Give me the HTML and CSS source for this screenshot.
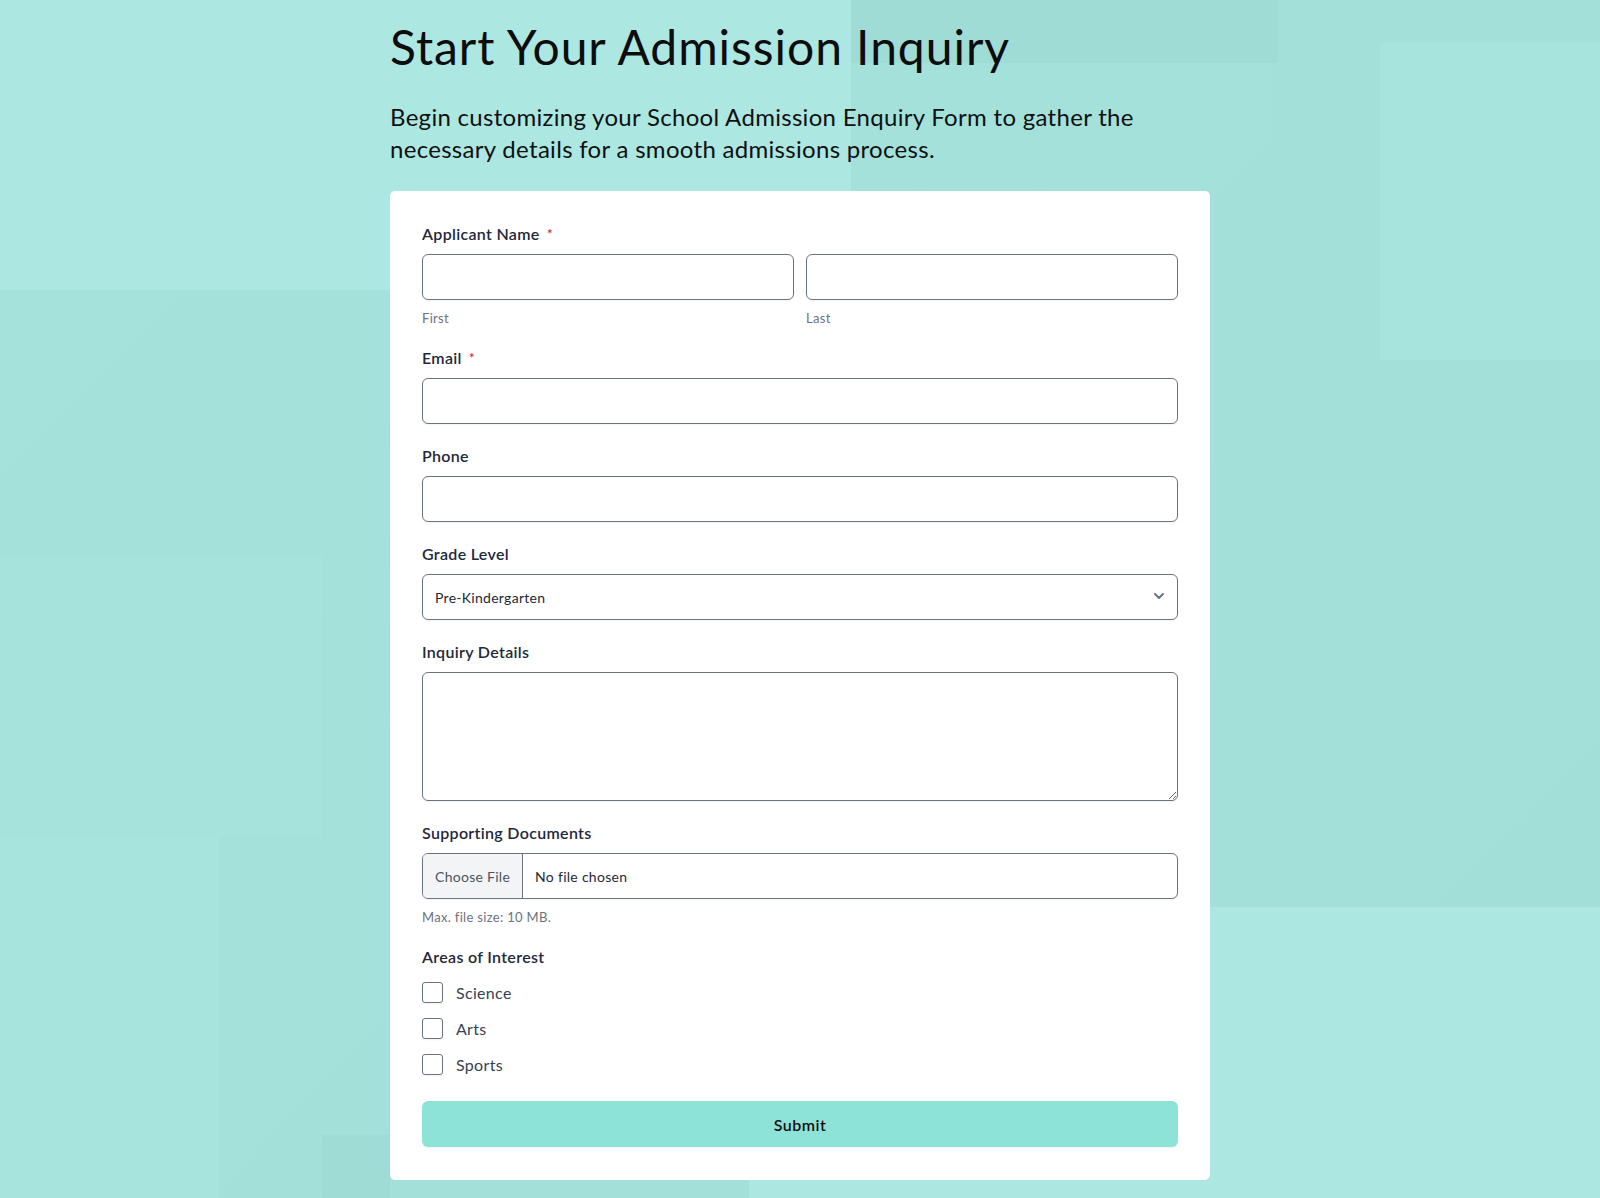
FILE: index.html
```html
<!DOCTYPE html>
<html lang="en">
<head>
<meta charset="utf-8">
<title>Start Your Admission Inquiry</title>
<link rel="stylesheet" href="styles.css">
</head>
<body>
<main class="page">
  <h1 class="title">Start Your Admission Inquiry</h1>
  <p class="intro">Begin customizing your School Admission Enquiry Form to gather the necessary details for a smooth admissions process.</p>

  <form class="card">
    <div class="field">
      <div class="label">Applicant Name <span class="req">*</span></div>
      <div class="name-row">
        <div class="name-col">
          <input class="input" type="text">
          <div class="sub">First</div>
        </div>
        <div class="name-col">
          <input class="input" type="text">
          <div class="sub">Last</div>
        </div>
      </div>
    </div>

    <div class="field">
      <div class="label">Email <span class="req">*</span></div>
      <input class="input" type="text">
    </div>

    <div class="field">
      <div class="label">Phone</div>
      <input class="input" type="text">
    </div>

    <div class="field">
      <div class="label">Grade Level</div>
      <div class="select-wrap">
        <div class="input select">Pre-Kindergarten</div>
        <svg class="chev" width="12" height="8" viewBox="0 0 12 8"><path d="M2 2 L6 6 L10 2" fill="none" stroke="#6b7280" stroke-width="2" stroke-linecap="round" stroke-linejoin="round"/></svg>
      </div>
    </div>

    <div class="field">
      <div class="label">Inquiry Details</div>
      <textarea class="input textarea"></textarea>
    </div>

    <div class="field">
      <div class="label">Supporting Documents</div>
      <div class="input file">
        <span class="file-btn">Choose File</span>
        <span class="file-name">No file chosen</span>
      </div>
      <div class="sub">Max. file size: 10 MB.</div>
    </div>

    <div class="field">
      <div class="label label-tight">Areas of Interest</div>
      <div class="checks">
        <label class="check"><input type="checkbox" class="box"><span>Science</span></label>
        <label class="check"><input type="checkbox" class="box"><span>Arts</span></label>
        <label class="check"><input type="checkbox" class="box"><span>Sports</span></label>
      </div>
    </div>

    <button type="button" class="submit">Submit</button>
  </form>
</main>
</body>
</html>
```

FILE: styles.css
```css
html, body {
  margin: 0;
  padding: 0;
}

body {
  font-family: Lato, "Noto Sans", sans-serif;
  color: #111;
  letter-spacing: 0.02em;
  min-height: 1198px;
  background-color: #a5e1db;
  background-repeat: no-repeat;
  background-image:
    linear-gradient(#a0dcd6, #a0dcd6),
    linear-gradient(#a8e4de, #a8e4de),
    linear-gradient(#a4e0da, #a4e0da),
    linear-gradient(#ade7e1, #ade7e1),
    linear-gradient(#a8e4de, #a8e4de),
    linear-gradient(#a7e3dd, #a7e3dd),
    linear-gradient(#a0dcd6, #a0dcd6),
    linear-gradient(#ade7e1, #ade7e1),
    linear-gradient(#ade7e1, #ade7e1),
    linear-gradient(135deg, #a6e2dc, #a3dfd9);
  background-position:
    851px 0,
    1380px 43px,
    1278px 0,
    1210px 907px,
    0 837px,
    0 556px,
    322px 1135px,
    749px 1180px,
    0 0,
    0 0;
  background-size:
    427px 63px,
    220px 317px,
    322px 642px,
    390px 291px,
    219px 361px,
    322px 281px,
    68px 63px,
    461px 18px,
    851px 290px,
    100% 100%;
}

.page {
  width: 820px;
  margin: 0 auto;
  padding: 18px 0 18px;
}

.title {
  margin: 0 0 25px;
  font-size: 48px;
  line-height: 58px;
  font-weight: 400;
  letter-spacing: 0.95px;
  color: #0d0d0d;
}

.intro {
  margin: 0 0 26px;
  font-size: 24px;
  line-height: 32px;
  letter-spacing: 0.3px;
  color: #111;
}

.card {
  background: #fff;
  border-radius: 5px;
  padding: 31px 32px 33px;
  display: flex;
  flex-direction: column;
  gap: 20px;
}

.field {
  display: flex;
  flex-direction: column;
}

.label {
  font-size: 16px;
  line-height: 24px;
  font-weight: 600;
  color: #1e293b;
  margin-bottom: 8px;
}

.label-tight {
  margin-bottom: 7px;
}

.req {
  color: #dc2626;
  font-size: 13px;
  margin-left: 3px;
  vertical-align: top;
}

.name-row {
  display: grid;
  grid-template-columns: 1fr 1fr;
  gap: 12px;
}

.name-col {
  display: flex;
  flex-direction: column;
}

.input {
  box-sizing: border-box;
  display: block;
  width: 100%;
  height: 46px;
  margin: 0;
  border: 1px solid #6b7280;
  border-radius: 6px;
  background: #fff;
  box-shadow: 0 1px 2px rgba(0, 0, 0, 0.05);
  font-family: Lato, "Noto Sans", sans-serif;
  font-size: 14px;
  letter-spacing: 0.02em;
  color: #1f2937;
  padding: 0 12px;
  outline: none;
}

.sub {
  margin-top: 11px;
  font-size: 13px;
  line-height: 15px;
  color: #6b7280;
}

.select-wrap {
  position: relative;
}

.select {
  display: flex;
  align-items: center;
}

.chev {
  position: absolute;
  right: 13px;
  top: 18px;
}

.textarea {
  height: 129px;
  resize: vertical;
  padding: 10px 12px;
}

.file {
  display: flex;
  align-items: center;
  padding: 0;
  overflow: hidden;
}

.file-btn {
  height: 100%;
  display: flex;
  align-items: center;
  padding: 0 12px;
  background: #f3f4f6;
  border-right: 1px solid #6b7280;
  color: #4b5563;
  font-size: 14px;
}

.file-name {
  padding-left: 12px;
  color: #1f2937;
  font-size: 14px;
}

.checks {
  display: flex;
  flex-direction: column;
  gap: 4px;
}

.check {
  display: flex;
  align-items: center;
  gap: 13px;
  height: 32px;
  font-size: 16px;
  color: #374151;
}

.box {
  appearance: none;
  -webkit-appearance: none;
  box-sizing: border-box;
  width: 21px;
  height: 21px;
  margin: 0;
  border: 1px solid #6b7280;
  border-radius: 3px;
  background: #fff;
  box-shadow: 0 1px 2px rgba(0, 0, 0, 0.05);
}

.submit {
  height: 46px;
  width: 100%;
  margin-top: 1px;
  border: none;
  border-radius: 6px;
  background: #8ee3d8;
  box-shadow: 0 1px 2px rgba(0, 0, 0, 0.06);
  font-family: Lato, "Noto Sans", sans-serif;
  font-size: 16px;
  font-weight: 600;
  letter-spacing: 0.5px;
  color: #111;
  cursor: pointer;
}
```
